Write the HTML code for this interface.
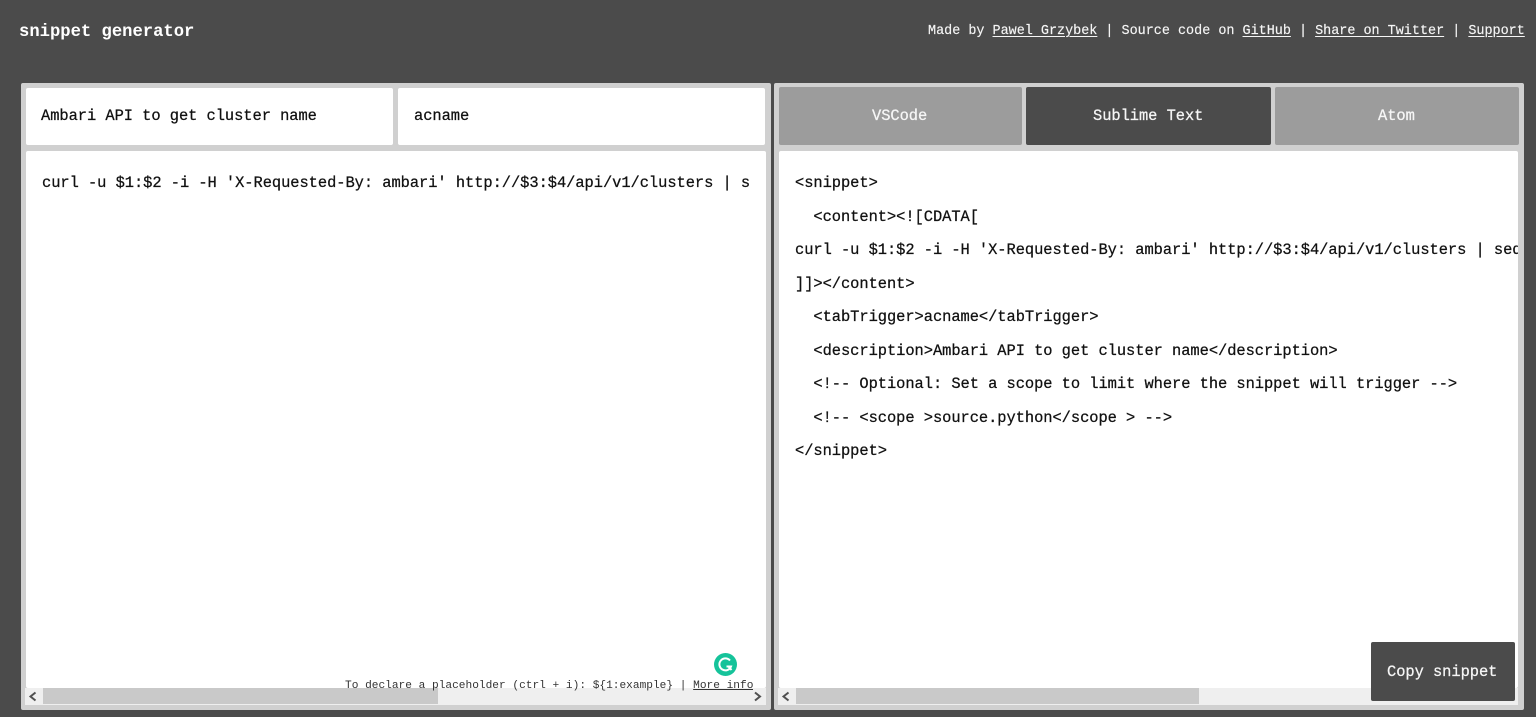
<!DOCTYPE html>
<html><head><meta charset="utf-8">
<style>
html,body{margin:0;padding:0;width:1536px;height:717px;overflow:hidden;background:#4b4b4b;font-family:"Liberation Mono",monospace;}
.a{position:absolute;white-space:pre;}
.box{position:absolute;border-radius:2px;}
.m{font-size:15.4px;letter-spacing:-0.04px;line-height:20px;color:#111;-webkit-text-stroke:.25px #111;}
.t{color:#f6f6f6;-webkit-text-stroke:.25px #f6f6f6;}
a{color:inherit;text-decoration:underline;text-underline-offset:2px;}
</style></head><body>
<div class="a" style="left:19px;top:23px;font-size:17.2px;line-height:20px;font-weight:bold;color:#fff">snippet generator</div>
<div class="a" style="left:928px;top:22px;font-size:13.45px;line-height:20px;color:#f6f6f6;-webkit-text-stroke:.15px #f6f6f6">Made by <a>Pawel Grzybek</a> | Source code on <a>GitHub</a> | <a>Share on Twitter</a> | <a>Support</a></div>

<div class="box" style="left:21px;top:83px;width:750px;height:627px;background:#d0d0d0"></div>
<div class="box" style="left:774px;top:83px;width:750px;height:627px;background:#d0d0d0"></div>

<div class="box" style="left:26px;top:88px;width:367px;height:57px;background:#fff"></div>
<div class="box" style="left:398px;top:88px;width:367px;height:57px;background:#fff"></div>
<div class="box" style="left:26px;top:151px;width:740px;height:537px;background:#fff"></div>

<div class="box" style="left:779px;top:87px;width:243px;height:58px;background:#9c9c9c"></div>
<div class="box" style="left:1026px;top:87px;width:245px;height:58px;background:#4b4b4b"></div>
<div class="box" style="left:1275px;top:87px;width:244px;height:58px;background:#9c9c9c"></div>
<div class="box" style="left:779px;top:151px;width:739px;height:537px;background:#fff"></div>

<div class="a m" style="left:41px;top:106px">Ambari API to get cluster name</div>
<div class="a m" style="left:414px;top:106px">acname</div>
<div class="a m" style="left:42px;top:173px;width:708px;overflow:hidden">curl -u $1:$2 -i -H 'X-Requested-By: ambari' http://$3:$4/api/v1/clusters | sed</div>

<div class="a m t" style="left:872px;top:106px">VSCode</div>
<div class="a m t" style="left:1093px;top:106px">Sublime Text</div>
<div class="a m t" style="left:1378px;top:106px">Atom</div>

<div class="a m" style="left:795px;top:173px">&lt;snippet&gt;</div>
<div class="a m" style="left:795px;top:207px">  &lt;content&gt;&lt;![CDATA[</div>
<div class="a m" style="left:795px;top:240px;width:723px;overflow:hidden">curl -u $1:$2 -i -H 'X-Requested-By: ambari' http://$3:$4/api/v1/clusters | sed</div>
<div class="a m" style="left:795px;top:274px">]]&gt;&lt;/content&gt;</div>
<div class="a m" style="left:795px;top:307px">  &lt;tabTrigger&gt;acname&lt;/tabTrigger&gt;</div>
<div class="a m" style="left:795px;top:341px">  &lt;description&gt;Ambari API to get cluster name&lt;/description&gt;</div>
<div class="a m" style="left:795px;top:374px">  &lt;!-- Optional: Set a scope to limit where the snippet will trigger --&gt;</div>
<div class="a m" style="left:795px;top:408px">  &lt;!-- &lt;scope &gt;source.python&lt;/scope &gt; --&gt;</div>
<div class="a m" style="left:795px;top:441px">&lt;/snippet&gt;</div>

<div class="box" style="left:25px;top:688px;width:741px;height:17px;background:#efefef;border-radius:0"></div>
<div class="box" style="left:43px;top:688px;width:395px;height:16px;background:#c9c9c9;border-radius:0"></div>
<div class="box" style="left:778px;top:688px;width:740px;height:17px;background:#efefef;border-radius:0"></div>
<div class="box" style="left:796px;top:688px;width:403px;height:16px;background:#c9c9c9;border-radius:0"></div>
<svg class="a" style="left:25px;top:688px" width="18" height="17"><path d="M10.500 4.500L5.500 8.500L10.500 12.500" fill="none" stroke="#505050" stroke-width="2"/></svg>
<svg class="a" style="left:748px;top:688px" width="18" height="17"><path d="M7 4.500L12 8.500L7 12.500" fill="none" stroke="#505050" stroke-width="2"/></svg>
<svg class="a" style="left:778px;top:688px" width="18" height="17"><path d="M10.500 4.500L5.500 8.500L10.500 12.500" fill="none" stroke="#505050" stroke-width="2"/></svg>

<div class="a" style="left:345px;top:678px;height:14px;overflow:hidden;font-size:11.16px;line-height:16px;color:#333">To declare a placeholder (ctrl + i): ${1:example} | <a style="text-underline-offset:1px">More info</a></div>

<div class="box" style="left:1371px;top:642px;width:144px;height:59px;background:#4b4b4b"></div>
<div class="a m t" style="left:1387px;top:662px">Copy snippet</div>

<svg class="a" style="left:714px;top:653px" width="23" height="23" viewBox="0 0 23 23"><circle cx="11.500" cy="11.500" r="11.500" fill="#15c39a"/><path d="M16 7.500A6 6 0 1 0 17 13.500H12.500" fill="none" stroke="#fff" stroke-width="2"/><path d="M14 13l3.500 4" stroke="#fff" stroke-width="2"/></svg>
</body></html>
